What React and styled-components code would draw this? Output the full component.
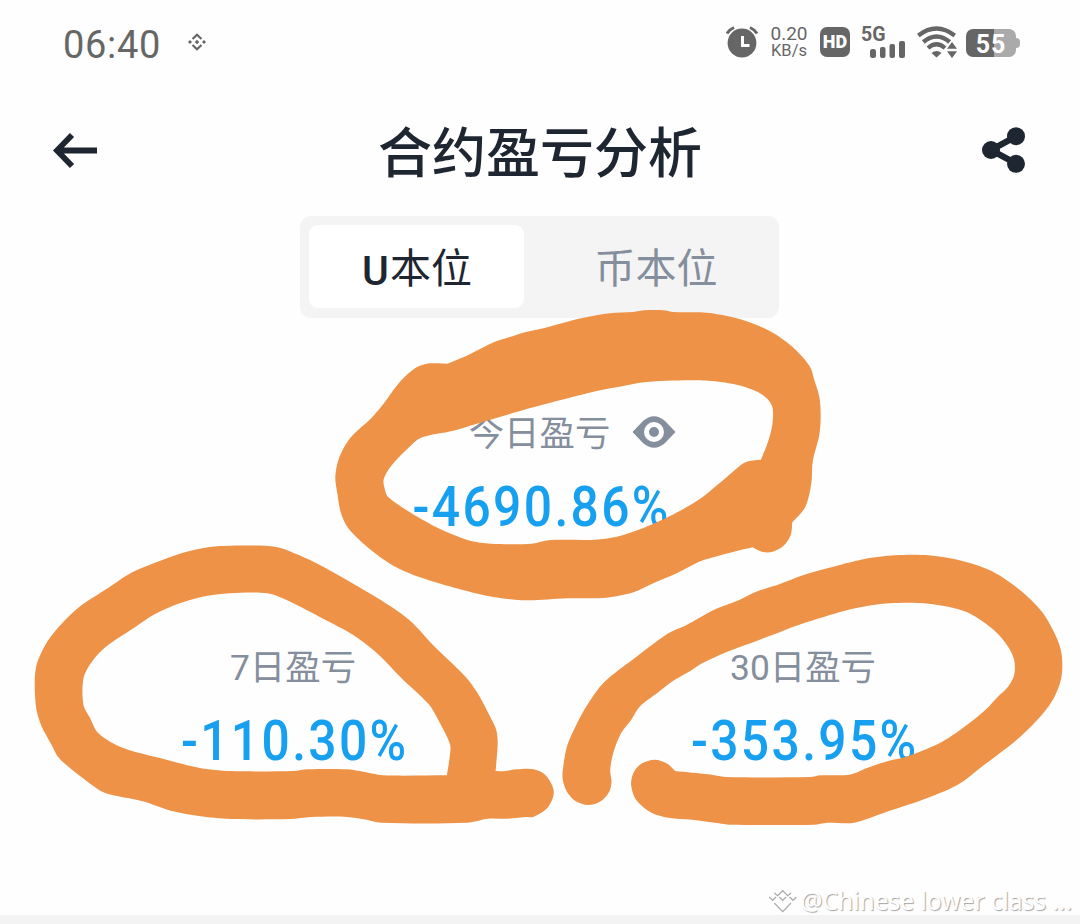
import React from 'react'
import styled, { createGlobalStyle } from 'styled-components'

// outlines of the marker strokes, a repeated point keeps a sharp corner
const topRing = [
  [447.3,363.7],[447.3,363.7],[463.3,357.3],[480,349],[496.7,341],[513.3,336],[525,332.3],[543.3,328.3],[560,323.7],[583.3,317.7],
  [610,313.3],[633.3,312],[645,310.3],[663.3,310.3],[673.3,312],[706.7,312.7],[735,317.7],[756.7,325],[776.7,335],[795,349.3],
  [810,366.7],[814.3,380],[819.3,396.7],[820.7,415],[819.3,435],[812.7,461.7],[811.7,480],[808.7,496.7],[804,509.3],[792.3,522.3],
  [792.3,522.3],[790.7,535],[783.3,546],[771.7,552],[761.7,551.7],[752.7,547.3],[752.7,547.3],[736.7,551],[713.3,557.3],[699,561.7],
  [676.7,573.3],[653.3,583.3],[633.3,592.3],[606.7,597.7],[566.7,598.3],[526.7,600.3],[493.3,597],[460,589.3],[420,577.3],[393.3,565.7],
  [370,549.3],[348.3,528.3],[341,513.3],[337.3,493.3],[335.3,476.7],[339,458.3],[350,438.3],[371.7,417.7],[383.3,404],[400,381.7],
  [415,368.3],[426.7,363.7],[436.7,363.3],
]
const topHole = [
  [421,437.7],[453.3,430.7],[486.7,420.7],[533.3,407.3],[596.7,391],[616.7,387.3],[640,382.7],[666.7,380.7],[708.3,380.7],[736.7,384.7],
  [757.3,391.7],[768.3,400],[772.7,408.3],[772.3,425],[768,441.7],[761,459.7],[761,459.7],[748.3,461.3],[740,465.7],[720,482.7],
  [698.3,500],[670,516],[640,529.3],[616.7,536.7],[595,539.7],[550,540],[531.7,543.7],[490.7,543.7],[470,540.7],[453.3,534.7],
  [433.3,525.7],[408.3,511.3],[388.3,497.3],[385,490],[383.7,479.3],[391.3,465.7],[407.3,449],
]
const leftRing = [
  [230.5,545.7],[265.5,545.7],[276,547],[286.6,550],[318,564],[377.8,598.3],[409.3,620],[433.9,646],[448,659.5],[465.5,676.7],
  [477.7,693.3],[491.8,720],[496.3,730],[497.7,743.3],[495.6,771],[495.6,771],[504,771.3],[516.3,769.3],[533.8,769.3],[546.1,775.7],
  [553.8,791.7],[547.9,807.3],[533.8,816.7],[525,817],[507.5,818.7],[488.2,818.7],[467.2,822.7],[381.3,822.7],[363.7,819.3],[344.5,816.7],
  [311,817],[290,819],[230.5,819],[198.9,816],[170.8,810.7],[142.8,801.3],[105.9,793.3],[91.9,785],[69.1,767.3],[57.9,756.7],
  [51.6,745],[41,725],[35.8,705],[35.8,668.3],[46.3,643.3],[62.1,623.3],[79.6,606.7],[107.7,588.3],[132.2,572.3],[160.3,560.7],
  [184.9,552.3],[209.4,547],
]
const leftHole = [
  [230.5,593.3],[267.3,593.3],[286.6,600],[318,616],[353.2,635],[377.8,654],[402.3,679],[428.6,704],[437.4,718.3],[450,744.3],
  [449.7,756.7],[446.9,775.3],[446.9,775.3],[383,775.3],[363.7,771.7],[346.2,769.3],[307.6,769.3],[293.6,771],[230.5,771],[198.9,767.7],
  [156.8,757.3],[128.7,750],[113,743.3],[97.2,732],[90.2,718.3],[83.5,705],[83.5,678.3],[91.9,661.7],[105.9,646.7],[135.7,626.7],
  [153.3,615],[177.8,604],[202.4,596.7],
]
const rightLoop = [
  [562.8,770],[562.8,780],[566.9,791.7],[575.4,801],[588.2,805],[600.7,801.3],[609.2,791.7],[611.5,781.7],[610.2,770],[613.2,753.3],
  [621,733.3],[631.1,720],[639.6,706.7],[658.2,692.3],[671.7,681.7],[690.3,671],[702.1,663.3],[729.2,651],[754.5,641.7],[783.3,630.7],
  [803.5,623.3],[844.1,611],[871.2,605.3],[894.8,603],[920.2,603],[945.5,606.3],[969.2,613.3],[994.6,630.7],[1008.1,646.7],[1014.2,660],
  [1014.2,675],[1008.1,686.7],[997.9,696.7],[986.1,709.3],[969.2,723.3],[942.2,741.7],[908.4,756],[888.1,761],[867.8,767.7],[849.2,774.7],
  [820.5,775.3],[810.3,777],[725.8,777],[708.9,774.3],[692,772.7],[675.1,771],[675.1,771],[666.6,763.3],[654.8,759.7],[641.3,763.7],
  [633.5,772.7],[631.1,785],[636.2,800],[651.4,812.7],[668.3,817.7],[692,819.7],[719,823.3],[729.2,824.7],[813.7,824.7],[827.2,822.7],
  [854.3,822.7],[888.1,811.3],[921.9,800],[957.4,785],[982.7,766],[1016.5,740],[1040.2,716.7],[1053.7,698.3],[1061.5,676.7],[1061.5,653.3],
  [1055.4,635],[1041.9,611.7],[1019.9,590],[992.9,571.7],[962.4,561],[928.6,555.3],[894.8,555.3],[864.4,559],[827.2,568.3],[803.5,575],
  [779.9,584],[756.2,591.7],[739.3,600],[715.7,609],[685.2,625.7],[668.3,633.3],[634.5,658.3],[604.1,682.3],[587.2,705],[575.4,726.7],
  [566.9,746.7],
]

const dist = (a, b) => Math.hypot(b[0] - a[0], b[1] - a[1])

const smooth = (pts) => {
  const n = pts.length
  let d = `M${pts[0][0]} ${pts[0][1]}`
  for (let i = 0; i < n; i++) {
    const a = pts[(i - 1 + n) % n]
    const b = pts[i]
    const c = pts[(i + 1) % n]
    const e = pts[(i + 2) % n]
    // handles follow the length of their own segment
    const len = dist(b, c) * 0.3
    const p = len / (dist(a, c) || 1)
    const q = len / (dist(b, e) || 1)
    d += `C${b[0] + (c[0] - a[0]) * p} ${b[1] + (c[1] - a[1]) * p} ${c[0] - (e[0] - b[0]) * q} ${c[1] - (e[1] - b[1]) * q} ${c[0]} ${c[1]}`
  }
  return d + 'Z'
}

const Marker = () => (
  <MarkerLayer viewBox="0 0 1080 924">
    <path d={smooth(topRing) + smooth(topHole)} />
    <path d={smooth(leftRing) + smooth(leftHole)} />
    <path d={smooth(rightLoop)} />
  </MarkerLayer>
)

const AlarmIcon = () => (
  <svg width="34" height="34" viewBox="0 0 34 34">
    <circle cx="16" cy="18" r="14.4" fill="#666" />
    <path d="M1 8.5Q3.500 4.500 8 2.500M31 8.500Q28.500 4.500 24 2.500" fill="none" stroke="#666" strokeWidth="3" />
    <path d="M16.500 11V20.500H23.500" fill="none" stroke="#fff" strokeWidth="3" />
  </svg>
)

const SignalIcon = () => (
  <svg width="36" height="17" viewBox="0 0 36 17">
    <g fill="#666">
      <rect x="0" y="8" width="6" height="9" rx="2.500" />
      <rect x="10" y="6" width="5.500" height="11" rx="2" />
      <rect x="19.500" y="3" width="5.500" height="14" rx="2" />
      <rect x="29" y="0" width="6" height="17" rx="2" />
    </g>
  </svg>
)

const WifiIcon = () => (
  <svg width="40" height="32" viewBox="0 0 40 32">
    <g fill="none" stroke="#666" strokeWidth="4.300">
      <path d="M1.300 9.500Q19.500 -4.500 37.700 9.500" />
      <path d="M6.300 16Q19.500 5 32.700 16" />
      <path d="M11 22Q19.500 14.500 28 22" />
    </g>
    <path d="M14.500 27Q19.500 23 24.500 27L19.500 31.500Z" fill="#666" />
    <path d="M35 14.500L41.500 23.500H28.500Z M35 33.500L41.500 24.500H28.500Z" fill="#666" stroke="#fefefe" strokeWidth="1.600" />
  </svg>
)

const BackIcon = () => (
  <svg width="46" height="36" viewBox="0 0 46 36">
    <path d="M20 3L5 18.500L20 34M5 18.500H45" fill="none" stroke="#1e2631" strokeWidth="5.800" />
  </svg>
)

const ShareIcon = () => (
  <svg width="44" height="46" viewBox="0 0 44 46">
    <path d="M34 9.500L9 23L34 36.500" fill="none" stroke="#1e2631" strokeWidth="6.400" />
    <g fill="#1e2631">
      <circle cx="34" cy="9.200" r="9" />
      <circle cx="9" cy="23" r="9" />
      <circle cx="34" cy="36.800" r="9" />
    </g>
  </svg>
)

const EyeIcon = () => (
  <svg width="44" height="32" viewBox="0 0 44 32">
    <path d="M.5 16L11 5Q22 -4.500 33 5L43.500 16L33 27Q22 36.500 11 27Z" fill="#848e9c" />
    <circle cx="22" cy="16" r="7.500" fill="#848e9c" stroke="#fefefe" strokeWidth="5" />
  </svg>
)

const BinanceIcon = () => (
  <svg width="18" height="18" viewBox="0 0 18 18">
    <g fill="none" stroke="#666" strokeWidth="2.200">
      <path d="M4.500 6L9 1.800L13.500 6M4.500 12L9 16.200L13.500 12" />
    </g>
    <path d="M9 6.800L11.200 9L9 11.200L6.800 9ZM2 7L4 9L2 11L0 9ZM16 7L18 9L16 11L14 9Z" fill="#666" />
  </svg>
)

const WatermarkIcon = () => (
  <svg width="28" height="24" viewBox="0 0 28 24">
    <path
      d="M5.300 4L8.600 6.700L13.700 1.700L18.700 6.700L22 4M.3 8L3.600 11.300L7 8M10.300 8L13.700 11.300L17 8M20.600 8L24 11.300L27.300 8M5.300 14L13.700 22.700L22 14"
      fill="none"
      stroke="#aaa"
      strokeWidth="1.200"
    />
  </svg>
)

const Stat = ({ label, value, eye }) => (
  <StatBox>
    <Label $eye={eye}>
      <span>{label}</span>
      {eye && <EyeIcon />}
    </Label>
    <Value>{value}</Value>
  </StatBox>
)

const App = () => {
  return (
    <>
      <GlobalStyle />
      <Page>
        <StatusBar>
          <Clock>06:40</Clock>
          <BinanceIcon />
          <StatusRight>
            <AlarmIcon />
            <Speed>
              <b>0.20</b>
              <span>KB/s</span>
            </Speed>
            <Hd><span>HD</span></Hd>
            <Network>
              <span>5G</span>
              <SignalIcon />
            </Network>
            <WifiIcon />
            <Battery>55</Battery>
          </StatusRight>
        </StatusBar>
        <Header>
          <BackIcon />
          <Title>合约盈亏分析</Title>
          <ShareIcon />
        </Header>
        <Tabs>
          <Tab $active><i>U</i>本位</Tab>
          <Tab>币本位</Tab>
        </Tabs>
        <Today>
          <Stat label="今日盈亏" value="-4690.86%" eye />
        </Today>
        <Periods>
          <Stat label="7日盈亏" value="-110.30%" />
          <Stat label="30日盈亏" value="-353.95%" />
        </Periods>
        <Footer />
        <Marker />
        <Watermark>
          <WatermarkIcon />
          @Chinese lower class ...
        </Watermark>
      </Page>
    </>
  )
}

const GlobalStyle = createGlobalStyle`
body{
  margin:0;
  background:#fefefe;
}
*{
  box-sizing:border-box;
}
svg{
  flex:none;
  display:block;
}
`;

const Page = styled.div`
position:relative;
width:1080px;
height:924px;
overflow:hidden;
display:flex;
flex-direction:column;
background:#fefefe;
font-family:Roboto,"Noto Sans CJK SC",sans-serif;
`;

const StatusBar = styled.div`
height:84px;
display:flex;
align-items:center;
padding:0 60px 0 63px;
color:#666;
`;

const Clock = styled.div`
width:125px;
padding-top:5px;
font-size:38px;
line-height:44px;
letter-spacing:0.7px;
`;

const StatusRight = styled.div`
margin-left:auto;
display:flex;
align-items:center;
`;

const Speed = styled.div`
width:50px;
margin-left:4px;
display:flex;
flex-direction:column;
align-items:center;
font-size:16.5px;
line-height:18px;
b{
  font-weight:400;
  font-size:19px;
  line-height:17px;
}
`;

const Hd = styled.div`
width:30px;
height:30px;
margin-left:6px;
display:flex;
align-items:center;
justify-content:center;
border-radius:7px;
background:#666;
color:#fff;
font-size:18px;
font-weight:900;
line-height:30px;
`;

const Network = styled.div`
width:45px;
height:32px;
margin:0 11px 0 11px;
display:flex;
flex-direction:column;
span{
  font-size:19.5px;
  font-weight:700;
  line-height:18px;
  height:15px;
}
svg{
  margin-left:9px;
}
`;

const Battery = styled.div`
position:relative;
width:50px;
height:28px;
margin:2px 4px 0 9px;
border-radius:7px;
background:linear-gradient(90deg,#666 55%,#aaa 55%);
color:#fff;
font-size:25px;
font-weight:700;
letter-spacing:1px;
line-height:31px;
text-align:center;
&::after{
  content:"";
  position:absolute;
  right:-4px;
  top:9px;
  width:4px;
  height:10px;
  border-radius:0 4px 4px 0;
  background:#aaa;
}
`;

const Header = styled.div`
height:132px;
display:flex;
align-items:center;
justify-content:space-between;
padding:0 54px 0 52px;
`;

const Title = styled.div`
padding-top:10px;
font-size:54px;
font-weight:500;
line-height:80px;
color:#1e2631;
`;

const Tabs = styled.div`
width:479px;
height:102px;
margin-left:300px;
padding:9px;
display:flex;
border-radius:11px;
background:#f4f4f4;
`;

const Tab = styled.div`
width:${(p) => (p.$active ? "215px" : "246px")};
padding:${(p) => (p.$active ? "5px 0 0 1px" : "5px 0 0 18px")};
height:83px;
display:flex;
align-items:center;
justify-content:center;
border-radius:9px;
background:${(p) => (p.$active ? "#fff" : "transparent")};
color:${(p) => (p.$active ? "#1e2631" : "#848e9c")};
font-size:41px;
line-height:60px;
i{
  padding:4px 1px 0 0;
  font-style:normal;
  font-weight:500;
}
`;

const Today = styled.div`
height:240px;
padding-top:87px;
display:flex;
justify-content:center;
`;

const Periods = styled.div`
height:357px;
padding:81px 22px 0 38px;
display:grid;
grid-template-columns:1fr 1fr;
`;

const StatBox = styled.div`
display:flex;
flex-direction:column;
align-items:center;
`;

const Label = styled.div`
height:54px;
padding-left:${(p) => (p.$eye ? "65px" : "0")};
display:flex;
align-items:center;
gap:22px;
font-size:35.4px;
line-height:52px;
color:#848e9c;
span{
  padding-top:4px;
}
`;

const Value = styled.div`
margin:16px -2.6px 0 0;
font-size:55px;
font-weight:500;
line-height:64px;
letter-spacing:2.6px;
color:#18a0f0;
transform:scaleX(0.905);
`;

const Footer = styled.div`
height:9px;
background:#f3f3f3;
`;

const MarkerLayer = styled.svg`
position:absolute;
left:0;
top:0;
width:1080px;
height:924px;
fill:#ed9247;
fill-rule:evenodd;
`;

const Watermark = styled.div`
position:absolute;
right:8px;
bottom:7px;
display:flex;
align-items:center;
gap:4px;
font-family:"Noto Sans",sans-serif;
font-size:24.5px;
line-height:32px;
color:#fff;
text-shadow:1px 1px 1px #a4a4a4;
white-space:nowrap;
`;

export default App
